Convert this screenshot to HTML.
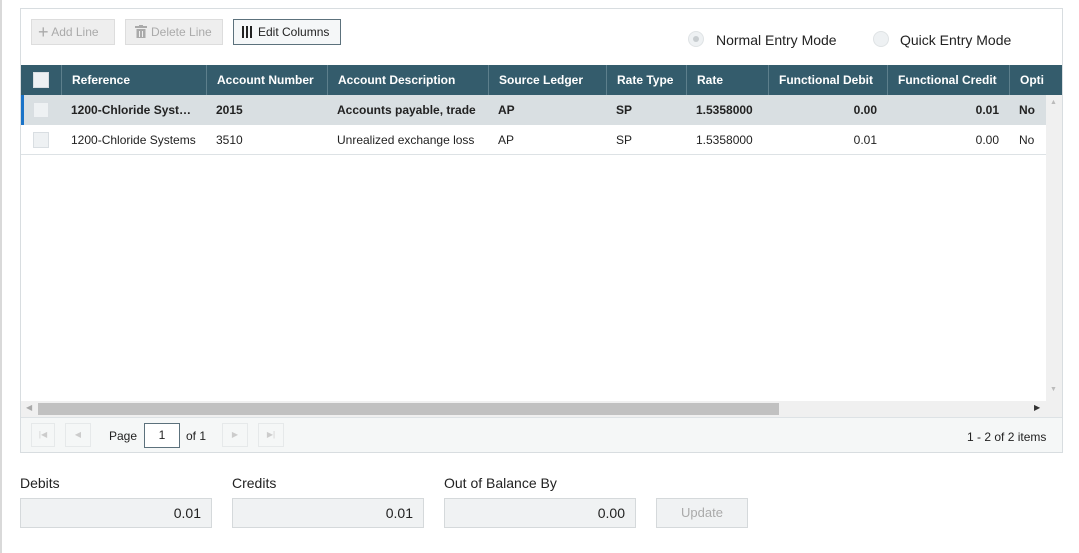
<!DOCTYPE html>
<html><head><style>
*{box-sizing:border-box;margin:0;padding:0}
body{width:1079px;height:553px;background:#fff;font-family:"Liberation Sans",Arial,sans-serif;font-size:12px;color:#222;position:relative;overflow:hidden}
.a{position:absolute}
.lb{left:0;top:0;width:2px;height:553px;background:#d9d9d9}
.panel{left:20px;top:8px;width:1043px;height:445px;border:1px solid #d8dde0}
.btn{height:26px;top:19px;border:1px solid #ddd;background:#eee;color:#aaa;font-size:12px;line-height:24px;padding-left:6px}
.hdr{left:21px;top:65px;width:1041px;height:30px;background:#345c6c;color:#fff;font-weight:bold}
.c{position:absolute;top:0;height:100%;line-height:30px;padding:0 10px;white-space:nowrap;overflow:hidden}
.sep{border-left:1px solid #5d7f8c}
.row{left:21px;width:1025px;height:30px}
.cb{position:absolute;left:12px;top:7px;width:16px;height:16px;background:#eef1f3;border:1px solid #d9dee2}
.r{text-align:right}
</style></head><body>
<div class="a lb"></div>
<div class="a panel"></div>
<div class="a btn" style="left:31px;width:84px"><span style="font-size:18px;vertical-align:-2px;color:#aaa">+</span> Add Line</div>
<div class="a btn" style="left:125px;width:98px"><svg width="12" height="13" style="vertical-align:-2px;margin:0 4px 0 3px"><rect x="0" y="1" width="12" height="2" fill="#aaa"/><rect x="4" y="0" width="4" height="2" fill="#aaa"/><rect x="1.5" y="4" width="9" height="9" fill="#aaa"/><rect x="4" y="6" width="1" height="6" fill="#eee"/><rect x="7" y="6" width="1" height="6" fill="#eee"/></svg>Delete Line</div>
<div class="a btn" style="left:233px;width:108px;background:#f5f7f8;border-color:#5c717c;color:#222;padding-left:8px"><svg width="10" height="12" style="vertical-align:-2px;margin-right:6px"><rect x="0" y="0" width="2" height="12" fill="#222"/><rect x="4" y="0" width="2" height="12" fill="#222"/><rect x="8" y="0" width="2" height="12" fill="#222"/></svg>Edit Columns</div>
<div class="a" style="left:688px;top:31px;width:16px;height:16px;border-radius:50%;background:#eef1f3;border:1px solid #dfe3e5"><div style="margin:4px;width:6px;height:6px;border-radius:50%;background:#c8cdd0"></div></div>
<div class="a" style="left:716px;top:32px;font-size:14px">Normal Entry Mode</div>
<div class="a" style="left:873px;top:31px;width:16px;height:16px;border-radius:50%;background:#eef1f3;border:1px solid #dfe3e5"></div>
<div class="a" style="left:900px;top:32px;font-size:14px">Quick Entry Mode</div>

<div class="a hdr">
<div class="cb" style="background:#eef1f3"></div>
<div class="c sep" style="left:40px;width:145px">Reference</div>
<div class="c sep" style="left:185px;width:121px">Account Number</div>
<div class="c sep" style="left:306px;width:161px">Account Description</div>
<div class="c sep" style="left:467px;width:118px">Source Ledger</div>
<div class="c sep" style="left:585px;width:80px">Rate Type</div>
<div class="c sep" style="left:665px;width:82px">Rate</div>
<div class="c sep" style="left:747px;width:119px">Functional Debit</div>
<div class="c sep" style="left:866px;width:122px">Functional Credit</div>
<div class="c sep" style="left:988px;width:53px">Opti</div>
</div>

<div class="a row" style="top:95px;background:#d9dfe2;font-weight:bold;border-left:3px solid #1a73c8">
<div class="cb" style="left:9px"></div>
<div class="c" style="left:37px;width:145px">1200-Chloride Syst…</div>
<div class="c" style="left:182px">2015</div>
<div class="c" style="left:303px">Accounts payable, trade</div>
<div class="c" style="left:464px">AP</div>
<div class="c" style="left:582px">SP</div>
<div class="c" style="left:662px">1.5358000</div>
<div class="c r" style="left:744px;width:119px">0.00</div>
<div class="c r" style="left:863px;width:122px">0.01</div>
<div class="c" style="left:985px">No</div>
</div>
<div class="a row" style="top:125px;border-bottom:1px solid #dde2e5">
<div class="cb"></div>
<div class="c" style="left:40px">1200-Chloride Systems</div>
<div class="c" style="left:185px">3510</div>
<div class="c" style="left:306px">Unrealized exchange loss</div>
<div class="c" style="left:467px">AP</div>
<div class="c" style="left:585px">SP</div>
<div class="c" style="left:665px">1.5358000</div>
<div class="c r" style="left:747px;width:119px">0.01</div>
<div class="c r" style="left:866px;width:122px">0.00</div>
<div class="c" style="left:988px">No</div>
</div>
<div class="a" style="left:1046px;top:95px;width:16px;height:306px;background:#f0f0f0"></div>
<div class="a" style="left:1050px;top:99px;font-size:7px;color:#bbb">▲</div>
<div class="a" style="left:1050px;top:386px;font-size:7px;color:#bbb">▼</div>
<div class="a" style="left:21px;top:401px;width:1041px;height:16px;background:#f0f0f0"></div>
<div class="a" style="left:38px;top:403px;width:741px;height:12px;background:#c1c1c1"></div>
<div class="a" style="left:26px;top:403px;font-size:8px;color:#aaa">◀</div>
<div class="a" style="left:1034px;top:403px;font-size:8px;color:#333">▶</div>
<div class="a" style="left:21px;top:417px;width:1041px;height:35px;background:#f5f7f7;border-top:1px solid #dde2e5"></div>
<div class="a" style="left:31px;top:423px;width:24px;height:24px;border:1px solid #e6e9ea;color:#ccc;font-size:8px;text-align:center;line-height:22px">|◀</div>
<div class="a" style="left:65px;top:423px;width:26px;height:24px;border:1px solid #e6e9ea;color:#ccc;font-size:8px;text-align:center;line-height:22px">◀</div>
<div class="a" style="left:109px;top:429px">Page</div>
<div class="a" style="left:144px;top:423px;width:36px;height:25px;border:1px solid #5c717c;background:#fff;text-align:center;line-height:23px">1</div>
<div class="a" style="left:186px;top:429px">of 1</div>
<div class="a" style="left:222px;top:423px;width:26px;height:24px;border:1px solid #e6e9ea;color:#ccc;font-size:8px;text-align:center;line-height:22px">▶</div>
<div class="a" style="left:258px;top:423px;width:26px;height:24px;border:1px solid #e6e9ea;color:#ccc;font-size:8px;text-align:center;line-height:22px">▶|</div>
<div class="a" style="left:967px;top:430px">1 - 2 of 2 items</div>

<div class="a" style="left:20px;top:475px;font-size:14px">Debits</div>
<div class="a" style="left:232px;top:475px;font-size:14px">Credits</div>
<div class="a" style="left:444px;top:475px;font-size:14px">Out of Balance By</div>
<div class="a" style="left:20px;top:498px;width:192px;height:30px;background:#f0f2f3;border:1px solid #d5d9db;text-align:right;padding-right:10px;line-height:28px;font-size:14px">0.01</div>
<div class="a" style="left:232px;top:498px;width:192px;height:30px;background:#f0f2f3;border:1px solid #d5d9db;text-align:right;padding-right:10px;line-height:28px;font-size:14px">0.01</div>
<div class="a" style="left:444px;top:498px;width:192px;height:30px;background:#f0f2f3;border:1px solid #d5d9db;text-align:right;padding-right:10px;line-height:28px;font-size:14px">0.00</div>
<div class="a" style="left:656px;top:498px;width:92px;height:30px;background:#f0f2f3;border:1px solid #d5d9db;text-align:center;line-height:28px;font-size:13px;color:#aaa">Update</div>
</body></html>
